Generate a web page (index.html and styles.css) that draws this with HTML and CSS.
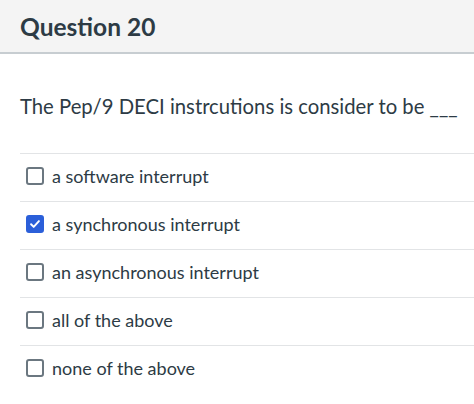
FILE: index.html
```html
<!DOCTYPE html>
<html lang="en">
<head>
    <meta charset="UTF-8">
    <title>Question 20</title>
    <link rel="stylesheet" href="styles.css">
</head>
<body>
    <div class="question-header">
        <h2>Question 20</h2>
    </div>
    <div class="question-body">
        <p class="question-text">The Pep/9 DECI instrcutions is consider to be ___</p>
        <div class="answers">
            <label class="answer"><span class="box"></span>a software interrupt</label>
            <label class="answer"><span class="box checked"><svg viewBox="0 0 16 16" width="16" height="16"><path d="M3.5 8.3l3 3 6-6.6" fill="none" stroke="#fff" stroke-width="2.2" stroke-linecap="round" stroke-linejoin="round"/></svg></span>a synchronous interrupt</label>
            <label class="answer"><span class="box"></span>an asynchronous interrupt</label>
            <label class="answer"><span class="box"></span>all of the above</label>
            <label class="answer"><span class="box"></span>none of the above</label>
        </div>
    </div>
</body>
</html>
```

FILE: styles.css
```css
body {
    margin: 0;
    font-family: Lato, "Noto Sans", sans-serif;
    color: #2d3b45;
    background-color: #ffffff;
}

.question-header {
    background-color: #f4f4f4;
    border-bottom: 2px solid #c7cdd1;
    height: 52px;
    padding: 0 20px;
    display: flex;
    align-items: center;
}

.question-header h2 {
    margin: 0;
    font-size: 24.5px;
    font-weight: bold;
}

.question-body {
    padding: 0 0 0 20px;
}

.question-text {
    margin: 0;
    padding: 40px 0 35px;
    font-size: 20.3px;
    line-height: 24px;
}

.answer {
    display: flex;
    align-items: center;
    box-sizing: border-box;
    height: 48px;
    padding-bottom: 3px;
    padding-left: 6px;
    border-top: 1px solid #e2e4e6;
    font-size: 18px;
}

.box {
    width: 14px;
    height: 14px;
    border: 2px solid #6b7780;
    border-radius: 3px;
    margin-right: 8px;
    display: flex;
    align-items: center;
    justify-content: center;
}

.box.checked {
    background-color: #2b5fd9;
    border-color: #2b5fd9;
}
```
